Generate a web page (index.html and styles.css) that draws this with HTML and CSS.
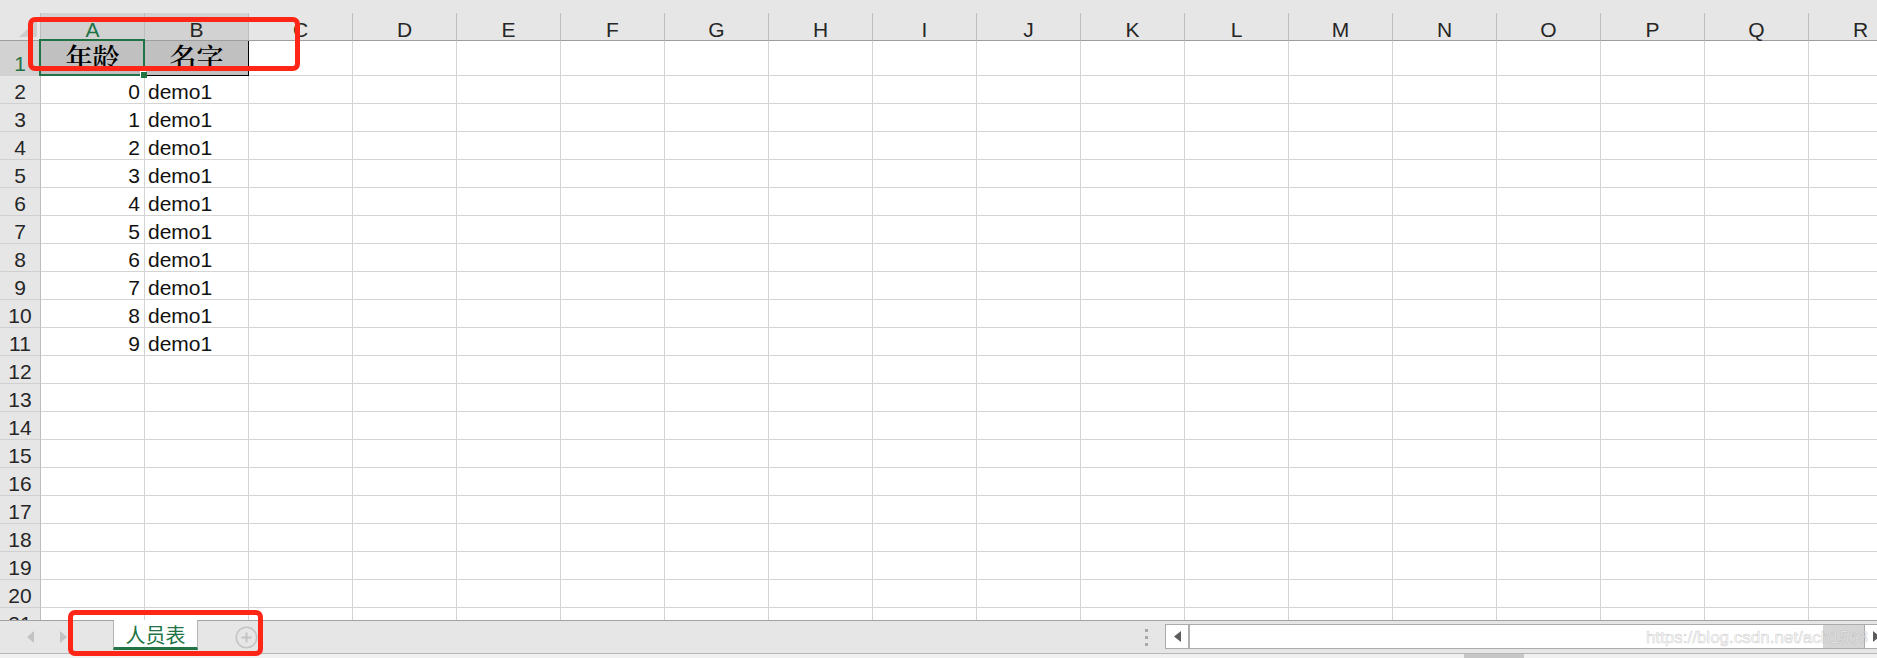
FILE: index.html
```html
<!DOCTYPE html>
<html lang="zh-CN">
<head>
<meta charset="utf-8">
<title>人员表</title>
<link rel="stylesheet" href="styles.css">
</head>
<body>
<div class="app">
  <div class="topstrip"></div>
  <div class="sheet">
    <div class="row hdr">
      <div class="corner"><svg width="40" height="27" viewBox="0 0 40 27"><polygon points="19,24 37,24 37,7" fill="#cdcdcd"/></svg></div>
      <div class="ch sel act">A</div>
      <div class="ch sel">B</div>
      <div class="ch">C</div>
      <div class="ch">D</div>
      <div class="ch">E</div>
      <div class="ch">F</div>
      <div class="ch">G</div>
      <div class="ch">H</div>
      <div class="ch">I</div>
      <div class="ch">J</div>
      <div class="ch">K</div>
      <div class="ch">L</div>
      <div class="ch">M</div>
      <div class="ch">N</div>
      <div class="ch">O</div>
      <div class="ch">P</div>
      <div class="ch">Q</div>
      <div class="ch">R</div>
    </div>
    <div class="row first">
      <div class="rh act">1</div>
      <div class="c title a1"><span class="ttl">年龄</span><span class="selbox"><span class="handle"></span></span></div>
      <div class="c title b"><span class="ttl">名字</span></div>
      <div class="rest"></div>
    </div>
    <div class="row"><div class="rh">2</div><div class="c num">0</div><div class="c">demo1</div><div class="rest"></div></div>
    <div class="row"><div class="rh">3</div><div class="c num">1</div><div class="c">demo1</div><div class="rest"></div></div>
    <div class="row"><div class="rh">4</div><div class="c num">2</div><div class="c">demo1</div><div class="rest"></div></div>
    <div class="row"><div class="rh">5</div><div class="c num">3</div><div class="c">demo1</div><div class="rest"></div></div>
    <div class="row"><div class="rh">6</div><div class="c num">4</div><div class="c">demo1</div><div class="rest"></div></div>
    <div class="row"><div class="rh">7</div><div class="c num">5</div><div class="c">demo1</div><div class="rest"></div></div>
    <div class="row"><div class="rh">8</div><div class="c num">6</div><div class="c">demo1</div><div class="rest"></div></div>
    <div class="row"><div class="rh">9</div><div class="c num">7</div><div class="c">demo1</div><div class="rest"></div></div>
    <div class="row"><div class="rh">10</div><div class="c num">8</div><div class="c">demo1</div><div class="rest"></div></div>
    <div class="row"><div class="rh">11</div><div class="c num">9</div><div class="c">demo1</div><div class="rest"></div></div>
    <div class="row"><div class="rh">12</div><div class="c"></div><div class="c"></div><div class="rest"></div></div>
    <div class="row"><div class="rh">13</div><div class="c"></div><div class="c"></div><div class="rest"></div></div>
    <div class="row"><div class="rh">14</div><div class="c"></div><div class="c"></div><div class="rest"></div></div>
    <div class="row"><div class="rh">15</div><div class="c"></div><div class="c"></div><div class="rest"></div></div>
    <div class="row"><div class="rh">16</div><div class="c"></div><div class="c"></div><div class="rest"></div></div>
    <div class="row"><div class="rh">17</div><div class="c"></div><div class="c"></div><div class="rest"></div></div>
    <div class="row"><div class="rh">18</div><div class="c"></div><div class="c"></div><div class="rest"></div></div>
    <div class="row"><div class="rh">19</div><div class="c"></div><div class="c"></div><div class="rest"></div></div>
    <div class="row"><div class="rh">20</div><div class="c"></div><div class="c"></div><div class="rest"></div></div>
    <div class="row"><div class="rh">21</div><div class="c"></div><div class="c"></div><div class="rest"></div></div>
  </div>
  <div class="tabbar">
    <div class="nav">
      <svg class="navarrow" width="7" height="12" viewBox="0 0 7 12"><polygon points="7,0 7,12 0,6" fill="#c3c3c3"/></svg>
      <svg class="navarrow" width="7" height="12" viewBox="0 0 7 12"><polygon points="0,0 0,12 7,6" fill="#c3c3c3"/></svg>
    </div>
    <div class="tab">人员表</div>
    <div class="addsheet"><svg width="23" height="23" viewBox="0 0 23 23"><circle cx="11.5" cy="11.5" r="10.2" fill="none" stroke="#c4c4c4" stroke-width="1.6"/><path d="M11.5 6.5v10M6.5 11.5h10" stroke="#c4c4c4" stroke-width="2"/></svg></div>
    <div class="spacer"></div>
    <div class="dots"><span></span><span></span><span></span></div>
    <div class="hscroll">
      <div class="sb-btn sb-l"><svg width="7" height="11" viewBox="0 0 7 11"><polygon points="7,0 7,11 0,5.5" fill="#5c5c5c"/></svg></div>
      <div class="sb-track"></div>
      <div class="sb-thumb"></div>
      <div class="sb-btn sb-r"><svg width="7" height="11" viewBox="0 0 7 11"><polygon points="0,0 0,11 7,5.5" fill="#5c5c5c"/></svg></div>
    </div>
  </div>
  <div class="statusstrip"><div class="vthumb"></div></div>

  <div class="watermark">https://blog.csdn.net/ach1563</div>
  <div class="mark mark-top"></div>
  <div class="mark mark-bottom"></div>
</div>
</body>
</html>
```

FILE: styles.css
```css
* { box-sizing: border-box; margin: 0; padding: 0; }
html, body { width: 1877px; height: 658px; overflow: hidden; background: #fff; }
body { font-family: "Liberation Sans", Arial, sans-serif; color: #222; }

.app { position: relative; width: 1877px; height: 658px; display: flex; flex-direction: column; overflow: hidden; }
.topstrip { flex: none; height: 13px; background: #e6e6e6; }
.sheet { flex: 1; min-height: 0; overflow: hidden; }

.row { display: flex; height: 28px; }
.row.hdr { height: 28px; }
.row.first { height: 35px; }

.corner { flex: none; width: 41px; background: #e6e6e6; border-right: 1px solid #bdbdbd; border-bottom: 1px solid #9e9e9e; }
.corner svg { display: block; }

.ch { flex: none; width: 104px; background: #e6e6e6; border-right: 1px solid #bdbdbd; border-bottom: 1px solid #9e9e9e;
      display: flex; justify-content: center; align-items: flex-end; font-size: 21px; line-height: 21px; color: #262626; }
.ch.sel { background: #d2d2d2; }
.ch.act { color: #217346; }

.rh { flex: none; width: 41px; background: #e6e6e6; border-right: 1px solid #bdbdbd; border-bottom: 1px solid #d0d0d0;
      display: flex; justify-content: center; align-items: flex-end; font-size: 21px; line-height: 21px; padding-bottom: 1px; color: #262626; }
.rh.act { background: #d2d2d2; color: #217346; }

.c { flex: none; width: 104px; border-right: 1px solid #d4d4d4; border-bottom: 1px solid #d4d4d4;
     display: flex; align-items: flex-end; font-size: 21px; line-height: 21px; padding: 0 3px 1px; white-space: nowrap; color: #111; }
.c.num { justify-content: flex-end; padding-right: 4px; }
.c.title { background: #c0c0c0; justify-content: center; color: #000; padding-bottom: 5px; }
.ttl { display: block; font-family: "Noto Serif CJK SC", "Noto Sans CJK SC", serif; font-weight: 600; font-size: 27px; line-height: 26px; }
.c.title.b { border-right-color: #000; border-bottom-color: #000; }
.c.a1 { position: relative; }
.selbox { position: absolute; left: -2px; top: -2px; right: -1px; bottom: -1px; border: 2px solid #217346; }
.handle { position: absolute; right: -4px; bottom: -4px; width: 6px; height: 6px; background: #217346; box-shadow: -1px -1px 0 0 #fff; }

.rest { flex: 1; border-bottom: 1px solid #d4d4d4;
        background: repeating-linear-gradient(to right, transparent 0 103px, #d4d4d4 103px 104px); }

.tabbar { flex: none; height: 34px; background: #e6e6e6; border-top: 1px solid #a3a3a3; border-bottom: 1px solid #b8b8b8;
          display: flex; align-items: flex-start; }
.nav { flex: none; width: 113px; height: 32px; display: flex; align-items: center; padding-left: 27px; gap: 26px; }
.navarrow { display: block; }
.tab { flex: none; width: 85px; height: 30px; margin-top: -1px; background: #fff; border-left: 1px solid #b4b4b4; border-right: 1px solid #b4b4b4;
       border-bottom: 3px solid #217346; display: flex; justify-content: center; align-items: center;
       font-family: "Noto Sans CJK SC", sans-serif; font-size: 20px; color: #217346; padding-top: 1px; }
.addsheet { flex: none; margin-left: 37px; height: 32px; display: flex; align-items: center; }
.addsheet svg { display: block; }
.spacer { flex: 1; }
.dots { flex: none; width: 3px; height: 32px; display: flex; flex-direction: column; justify-content: center; gap: 4px; }
.dots span { display: block; width: 3px; height: 3px; background: #a8a8a8; }

.hscroll { flex: none; width: 712px; height: 25px; margin-left: 17px; margin-top: 3px; background: #fff;
           border: 1px solid #ababab; border-right: none; display: flex; overflow: hidden; }
.sb-btn { flex: none; width: 24px; display: flex; align-items: center; justify-content: center; background: #fff; }
.sb-btn svg { display: block; }
.sb-l { border-right: 2px solid #b0b0b0; }
.sb-r { border-left: 1px solid #ababab; justify-content: flex-start; padding-left: 8px; }
.sb-track { flex: none; width: 633px; }
.sb-thumb { flex: none; width: 41px; background: #d5d5d5; }

.statusstrip { flex: none; height: 4px; background: #f1f1f1; display: flex; }
.vthumb { margin-left: 1464px; width: 60px; height: 4px; background: #c6c6c6; }

.watermark { position: absolute; right: 9px; top: 629px; font-family: "Liberation Sans", Arial, sans-serif; font-size: 17px; line-height: 17px;
             color: rgba(255, 255, 255, 0.55); -webkit-text-stroke: 0.7px rgba(160, 160, 160, 0.45); white-space: nowrap; }

.mark { position: absolute; border: 5px solid #ff2618; border-radius: 7px; }
.mark-top { left: 28px; top: 17px; width: 272px; height: 54px; }
.mark-bottom { left: 68px; top: 610px; width: 195px; height: 46px; }
```
